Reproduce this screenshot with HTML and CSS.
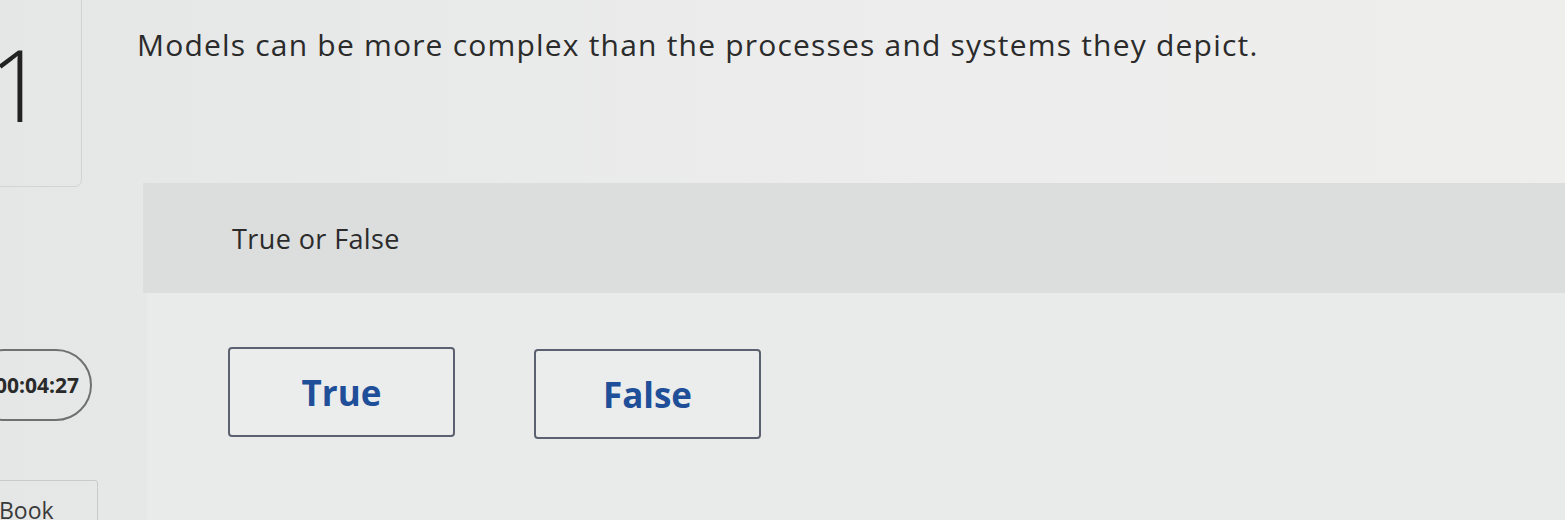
FILE: index.html
```html
<!DOCTYPE html>
<html lang="en">
<head>
    <meta charset="UTF-8">
    <meta name="viewport" content="width=device-width, initial-scale=1.0">
    <title>Question 1</title>
    <link rel="stylesheet" href="styles.css">
</head>
<body>
    <div class="page">
        <aside class="side">
            <div class="num-card">1</div>
            <div class="timer">00:04:27</div>
            <div class="book">Book</div>
        </aside>
        <main class="main">
            <div class="question">Models can be more complex than the processes and systems they depict.</div>
            <div class="prompt">True or False</div>
            <div class="answers">
                <button class="choice">True</button>
                <button class="choice choice-low">False</button>
            </div>
        </main>
    </div>
</body>
</html>
```

FILE: styles.css
```css
body {
    margin: 0;
    padding: 0;
    background-color: #e8e9e9;
    font-family: "Open Sans", Lato, Arial, sans-serif;
    color: #2b2b2b;
    overflow: hidden;
}
.page {
    display: flex;
    height: 520px;
    background: linear-gradient(90deg, #e5e6e6, #ecedec 60%, #eeeeed);
}
.side {
    width: 100px;
    flex: none;
    display: flex;
    flex-direction: column;
    align-items: flex-end;
}
.side > div {
    flex: none;
}
.num-card {
    box-sizing: border-box;
    width: 122px;
    height: 207px;
    margin: -20px 18px 0 0;
    padding: 52px 0 0 28px;
    border: 1px solid #d2d3d3;
    border-radius: 0 0 7px 0;
    font-size: 100px;
    font-weight: 350;
    line-height: 1;
    color: #222;
}
.timer {
    box-sizing: border-box;
    width: 124px;
    height: 72px;
    margin: 162px 8px 0 0;
    padding-right: 11px;
    border: 2px solid #6d7170;
    border-radius: 36px;
    display: flex;
    align-items: center;
    justify-content: flex-end;
    font-size: 21px;
    font-weight: 700;
    color: #2a2a2a;
}
.book {
    box-sizing: border-box;
    width: 104px;
    height: 60px;
    margin: 59px 2px 0 0;
    padding: 13px 0 0 4px;
    border: 1px solid #c9caca;
    border-radius: 3px;
    font-size: 23px;
    color: #3a3a3a;
}
.main {
    flex: 1;
    display: flex;
    flex-direction: column;
}
.question {
    box-sizing: border-box;
    height: 183px;
    padding: 25px 0 0 37px;
    font-size: 30px;
    line-height: 40px;
    letter-spacing: 1.2px;
}
.prompt {
    height: 110px;
    margin-left: 43px;
    padding-left: 89px;
    display: flex;
    align-items: center;
    background-color: #dcdddd;
    font-size: 27px;
    letter-spacing: 0.4px;
}
.answers {
    flex: 1;
    margin-left: 47px;
    padding: 54px 0 0 81px;
    display: flex;
    align-items: flex-start;
    gap: 79px;
    background-color: #e9eaea;
}
.choice {
    width: 227px;
    height: 90px;
    border: 2px solid #5b6170;
    border-radius: 4px;
    background-color: #ebecec;
    font-family: "Open Sans", Lato, Arial, sans-serif;
    font-size: 35px;
    font-weight: 700;
    color: #1f4f98;
    cursor: pointer;
}
.choice-low {
    margin-top: 2px;
}
```
